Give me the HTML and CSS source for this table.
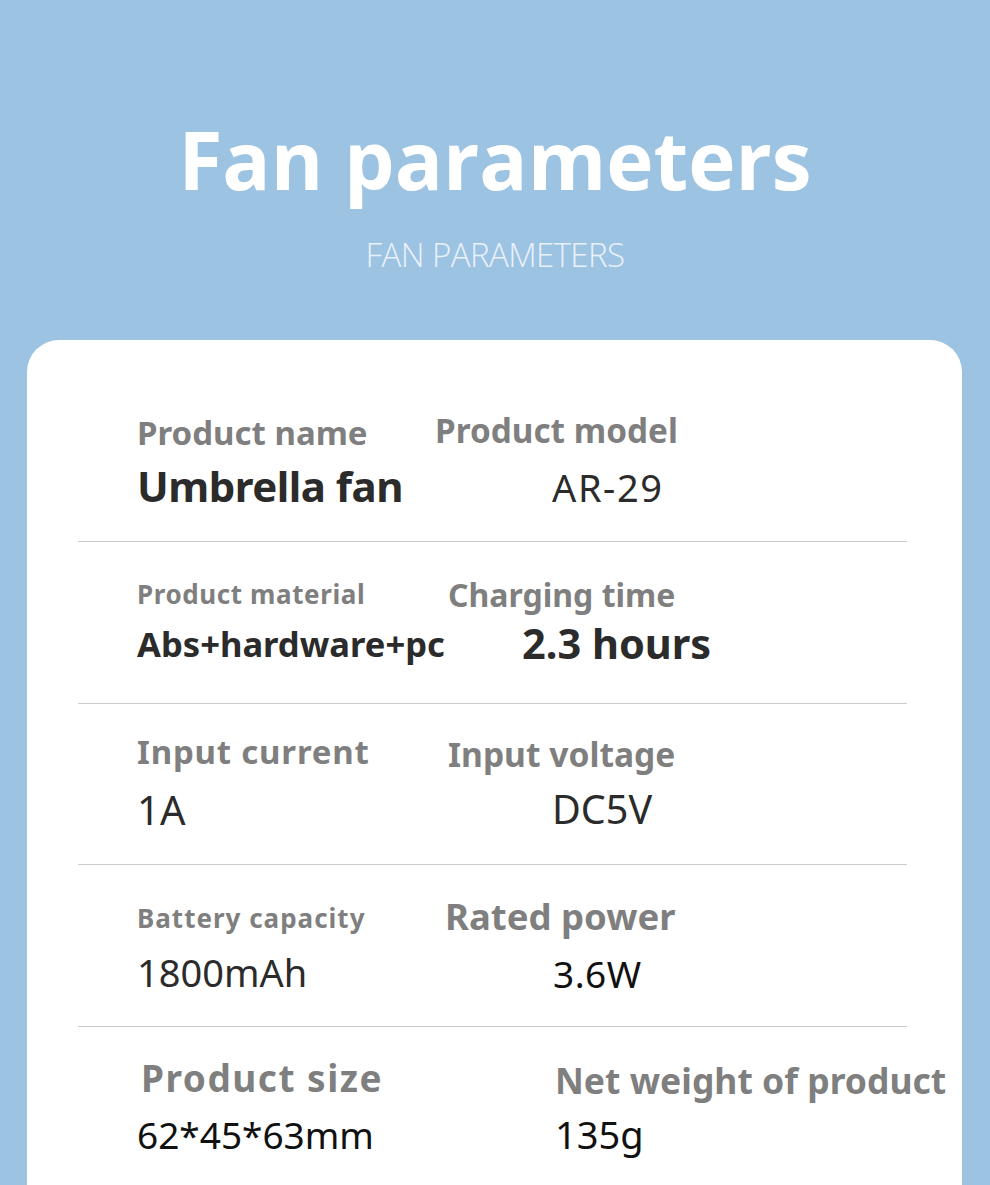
FILE: index.html
```html
<!DOCTYPE html>
<html>
<head>
<meta charset="utf-8">
<link rel="stylesheet" href="styles.css">
</head>
<body>
<header class="hero">
  <h1 class="title">Fan parameters</h1>
  <p class="subtitle">FAN PARAMETERS</p>
</header>
<main class="card">
  <section class="row row-1">
    <div class="cell c1">
      <div class="label t1-l">Product name</div>
      <div class="value bold t1-v">Umbrella fan</div>
    </div>
    <div class="cell c2 r1">
      <div class="label t1-rl">Product model</div>
      <div class="value t1-rv">AR-29</div>
    </div>
  </section>
  <section class="row row-2">
    <div class="cell c1">
      <div class="label t2-l">Product material</div>
      <div class="value bold t2-v">Abs+hardware+pc</div>
    </div>
    <div class="cell c2 r2">
      <div class="label t2-rl">Charging time</div>
      <div class="value bold t2-rv">2.3 hours</div>
    </div>
  </section>
  <section class="row row-3">
    <div class="cell c1">
      <div class="label t3-l">Input current</div>
      <div class="value t3-v">1A</div>
    </div>
    <div class="cell c2 r3">
      <div class="label t3-rl">Input voltage</div>
      <div class="value t3-rv">DC5V</div>
    </div>
  </section>
  <section class="row row-4">
    <div class="cell c1">
      <div class="label t4-l">Battery capacity</div>
      <div class="value t4-v">1800mAh</div>
    </div>
    <div class="cell c2 r4">
      <div class="label t4-rl">Rated power</div>
      <div class="value black t4-rv">3.6W</div>
    </div>
  </section>
  <section class="row row-5">
    <div class="cell c1">
      <div class="label t5-l">Product size</div>
      <div class="value black t5-v">62*45*63mm</div>
    </div>
    <div class="cell c2 r5">
      <div class="label t5-rl">Net weight of product</div>
      <div class="value black t5-rv">135g</div>
    </div>
  </section>
</main>
</body>
</html>
```
FILE: styles.css
```css
html, body {
  margin: 0;
  padding: 0;
}
body {
  width: 990px;
  height: 1185px;
  overflow: hidden;
  background: #9dc3e3;
  font-family: "Noto Sans", "Open Sans", sans-serif;
}
.hero {
  height: 340px;
  display: flex;
  flex-direction: column;
  align-items: center;
}
.title {
  margin: 104px 0 0;
  font-family: "Open Sans", sans-serif;
  font-weight: 700;
  font-size: 80px;
  line-height: 110px;
  color: #ffffff;
}
.subtitle {
  margin: 21px 0 0;
  font-family: "Open Sans", sans-serif;
  font-weight: 300;
  font-size: 33px;
  line-height: 40px;
  color: #e9f1f9;
  letter-spacing: -0.6px;
}
.card {
  margin: 0 28px 0 27px;
  background: #ffffff;
  border-radius: 32px 32px 0 0;
  padding: 0 55px 0 51px;
  height: 900px;
}
.row {
  border-bottom: 1px solid #cccccc;
  display: flex;
  box-sizing: border-box;
}
.row-1 { height: 202px; }
.row-2 { height: 162px; }
.row-3 { height: 161px; }
.row-4 { height: 162px; }
.row-5 { height: 170px; border-bottom: none; }
.cell {
  display: flex;
  flex-direction: column;
  align-items: flex-start;
}
.c1 {
  margin-left: 59px;
  width: 240px;
}
.r1 { margin-left: 58px; }
.r2 { margin-left: 71px; }
.r3 { margin-left: 71px; }
.r4 { margin-left: 68px; }
.r5 { margin-left: 178px; }
.label, .value {
  line-height: 1;
  white-space: nowrap;
}
.label {
  color: #7f7f7f;
  font-weight: 700;
}
.value {
  color: #2b2b2b;
}
.bold { font-weight: 700; }
.black { color: #111111; }

/* row 1 */
.t1-l { font-size: 33px; margin-top: 76px; }
.t1-v { font-size: 42px; margin-top: 16px; letter-spacing: -0.5px; }
.t1-rl { font-size: 33.3px; margin-top: 74px; }
.t1-rv { font-size: 38px; margin-top: 21px; margin-left: 117px; letter-spacing: 1.6px; }

/* row 2 */
.t2-l { font-size: 26px; margin-top: 39px; letter-spacing: 0.6px; }
.t2-v { font-size: 34.6px; margin-top: 20px; }
.t2-rl { font-size: 32px; margin-top: 37px; }
.t2-rv { font-size: 41.5px; margin-top: 12px; margin-left: 74px; }

/* row 3 */
.t3-l { font-size: 33px; margin-top: 31px; letter-spacing: 0.8px; }
.t3-v { font-size: 40px; margin-top: 22px; }
.t3-rl { font-size: 33.6px; margin-top: 34px; }
.t3-rv { font-size: 39.5px; margin-top: 18px; margin-left: 104px; }

/* row 4 */
.t4-l { font-size: 26px; margin-top: 40px; letter-spacing: 1px; }
.t4-v { font-size: 38px; margin-top: 22px; }
.t4-rl { font-size: 36.5px; margin-top: 33px; }
.t4-rv { font-size: 37px; margin-top: 20px; margin-left: 108px; letter-spacing: 0.5px; }

/* row 5 */
.t5-l { font-size: 37px; margin-top: 32px; margin-left: 4px; letter-spacing: 1.5px; }
.t5-v { font-size: 37px; margin-top: 20px; }
.t5-rl { font-size: 35.5px; margin-top: 36px; }
.t5-rv { font-size: 38px; margin-top: 16px; }
```
